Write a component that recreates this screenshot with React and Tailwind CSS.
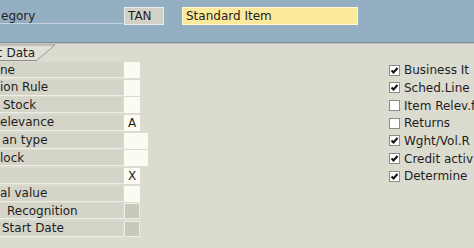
import React from "react";

const rows = [
  { label: "ne", value: "", wide: false, off: 0 },
  { label: "ion Rule", value: "", wide: false, off: 0 },
  { label: "Stock", value: "", wide: false, off: 3 },
  { label: "elevance", value: "A", wide: false, off: 0 },
  { label: "an type", value: "", wide: true, off: 2 },
  { label: "lock", value: "", wide: true, off: 0 },
  { label: "", value: "X", wide: false, off: 0 },
  { label: "al value", value: "", wide: false, off: 0 },
  { label: "Recognition", value: "", wide: false, off: 7, disabled: true },
  { label: "Start Date", value: "", wide: false, off: 2, disabled: true },
];

const checks = [
  { label: "Business It", on: true },
  { label: "Sched.Line", on: true },
  { label: "Item Relev.f", on: false },
  { label: "Returns", on: false },
  { label: "Wght/Vol.R", on: true },
  { label: "Credit activ", on: true },
  { label: "Determine", on: true },
];

const CheckBox = ({ on }) => (
  <span className="w-[11px] h-[11px] shrink-0 bg-white border border-[#8d8c84] flex items-center justify-center">
    {on && (
      <svg width="9" height="9" viewBox="0 0 9 9">
        <polyline points="1.5,4.5 3.5,6.5 7.5,2" fill="none" stroke="#111" strokeWidth="2" />
      </svg>
    )}
  </span>
);

const App = () => {
  return (
    <div
      className="w-[474px] h-[248px] overflow-hidden bg-[#dcdbd0] text-[12px] leading-none text-[#1e1e1e]"
      style={{ fontFamily: "'DejaVu Sans', Verdana, sans-serif" }}
    >
      {/* header */}
      <div className="h-[42px] bg-[#95afc2] flex items-start pt-[7px]">
        <div className="w-[123px] h-[17px] border-b border-[#c4d3de] flex items-center pt-[1px]">
          <span className="pl-[1px]">egory</span>
        </div>
        <div className="ml-[1px] w-[40px] h-[18px] bg-[#d3d1c6] border border-[#e6ebee] flex items-center pl-[3px]">
          TAN
        </div>
        <div className="ml-[18px] w-[176px] h-[18px] bg-[#fde99b] border border-[#fff6d2] flex items-center pl-[3px]">
          Standard Item
        </div>
      </div>
      <div className="h-[1px] bg-[#7e8f9b]" />
      <div className="h-[1px] bg-[#b9c3c8]" />

      {/* tab */}
      <div className="relative h-[17px]">
        <svg className="absolute left-0 top-0" width="60" height="17" viewBox="0 0 60 17">
          <polygon points="0,1 55,1 37,16 0,16" fill="#e2e1d7" />
          <polyline points="0,1 55,1 37,16" fill="none" stroke="#9e9d94" strokeWidth="1" />
          <line x1="0" y1="16.5" x2="37" y2="16.5" stroke="#8f8e86" strokeWidth="1" />
        </svg>
        <span className="relative block pt-[3px] -ml-[4px]">c Data</span>
      </div>

      {/* body */}
      <div className="flex pt-[1px]">
        <div className="flex flex-col">
          {rows.map((r, i) => (
            <div key={i} className="flex h-[17.67px]">
              <div className="w-[123px] h-[16px] bg-[#d5d4c8] border-b border-[#efeee6] flex items-center overflow-hidden">
                <span style={{ paddingLeft: r.off }}>{r.label}</span>
              </div>
              <div
                className={`ml-[1px] h-[16px] flex items-center justify-center ${
                  r.wide ? "w-[24px]" : "w-[16px]"
                } ${
                  r.disabled
                    ? "bg-[#c9c8bd] border border-[#eeede5]"
                    : "bg-[#fcfbf1]"
                }`}
              >
                {r.value}
              </div>
            </div>
          ))}
        </div>

        <div className="ml-[241px] flex flex-col">
          {checks.map((c, i) => (
            <div key={i} className="flex items-center h-[17.67px] pb-[1px] gap-[4px] whitespace-nowrap">
              <CheckBox on={c.on} />
              <span>{c.label}</span>
            </div>
          ))}
        </div>
      </div>
    </div>
  );
};

export default App;
